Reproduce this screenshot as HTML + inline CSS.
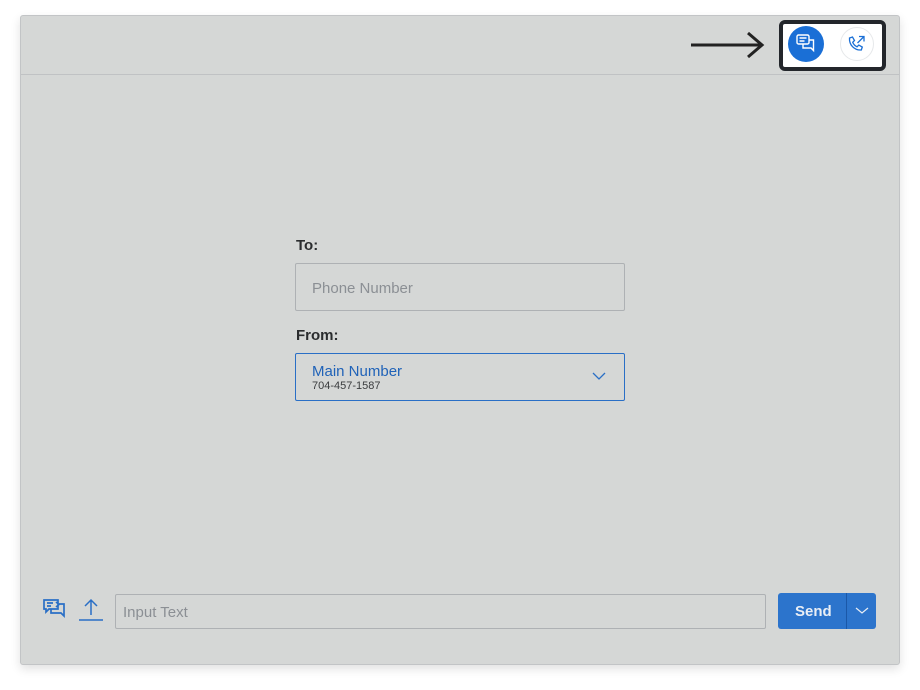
<!DOCTYPE html>
<html><head><style>
body{margin:0;width:920px;height:690px;background:#fff;font-family:"Liberation Sans",sans-serif;position:relative;overflow:hidden}
.panel{position:absolute;left:20px;top:15px;width:878px;height:648px;background:#d5d7d6;border:1px solid #c2c4c6;border-radius:3px;box-shadow:0 4px 10px rgba(0,0,0,.12)}
.hdr{position:absolute;left:0;top:58px;width:100%;height:1px;background:#c0c2c4}
.abs{position:absolute}
</style></head><body>
<div class="panel"><div class="hdr"></div></div>
<svg class="abs" style="left:690px;top:30px" width="80" height="30"><path d="M1 15H72M58 3L72 15L58 27" stroke="#222" stroke-width="3" fill="none"/></svg>
<div class="abs" style="left:779px;top:20px;width:99px;height:43px;border:4px solid #23262b;border-radius:6px;background:#fff"></div>
<div class="abs" style="left:788px;top:26px;width:36px;height:36px;border-radius:50%;background:#1a6fd6"></div>
<svg class="abs" style="left:795px;top:33px" width="22" height="22" fill="none" stroke="#fff" stroke-width="1.4"><rect x="2" y="2" width="12" height="9" rx="1.5"/><path d="M4.5 5h7M4.5 8h5M8 11v4h8l2.5 2.5V7H14"/></svg>
<div class="abs" style="left:840px;top:27px;width:34px;height:34px;border-radius:50%;background:#fff;border:1px solid #e6e8ea;box-sizing:border-box"></div>
<svg class="abs" style="left:846px;top:33px" width="22" height="22" fill="none" stroke="#1a6fd6" stroke-width="1.3"><path d="M3.5 5l3-1 2 3.5-1.8 1.8c.8 2 2.3 3.6 4.3 4.5l1.8-1.8 3.5 2-1 3C8.5 17.5 3 12 3.5 5zM11.5 10L18 3.5M13 3.5h5v5"/></svg>
<div class="abs" style="left:296px;top:237px;font-size:15px;font-weight:bold;color:#2a2c2e">To:</div>
<div class="abs" style="left:295px;top:263px;width:328px;height:46px;border:1px solid #aeb1b4;border-radius:2px"></div>
<div class="abs" style="left:312px;top:280px;font-size:15px;color:#8b8f94">Phone Number</div>
<div class="abs" style="left:296px;top:327px;font-size:15px;font-weight:bold;color:#2a2c2e">From:</div>
<div class="abs" style="left:295px;top:353px;width:328px;height:46px;border:1px solid #2a6fc6;border-radius:2px"></div>
<div class="abs" style="left:312px;top:363px;font-size:15px;color:#1f62b8">Main Number</div>
<div class="abs" style="left:312px;top:380px;font-size:11px;color:#3a3c3e">704-457-1587</div>
<svg class="abs" style="left:591px;top:371px" width="16" height="10"><path d="M2 2l6 6 6-6" stroke="#2a6fc6" stroke-width="1.3" fill="none"/></svg>
<svg class="abs" style="left:42px;top:598px" width="26" height="26" fill="none" stroke="#2a6fc6" stroke-width="1.7"><path d="M2 2h14v9H7l-3 3v-3H2zM5 5h6M5 8h4M14 4l3 2.5-3 2.5M9 11v4h10l3 3V6h-5"/></svg>
<svg class="abs" style="left:78px;top:597px" width="26" height="26" fill="none" stroke="#2a6fc6" stroke-width="1.5"><path d="M13 3v15M7 9l6-6 6 6M1 23h24"/></svg>
<div class="abs" style="left:115px;top:594px;width:649px;height:33px;border:1px solid #aeb1b4;border-radius:2px"></div>
<div class="abs" style="left:123px;top:604px;font-size:15px;color:#8b8f94">Input Text</div>
<div class="abs" style="left:778px;top:593px;width:98px;height:36px;background:#2c74cc;border-radius:3px"></div>
<div class="abs" style="left:846px;top:593px;width:1px;height:36px;background:#1b58a8"></div>
<div class="abs" style="left:795px;top:603px;font-size:15px;font-weight:bold;color:#e9eef5">Send</div>
<svg class="abs" style="left:854px;top:606px" width="16" height="10"><path d="M2 2l6 5 6-5" stroke="#e9eef5" stroke-width="1.2" fill="none"/></svg>
</body></html>
